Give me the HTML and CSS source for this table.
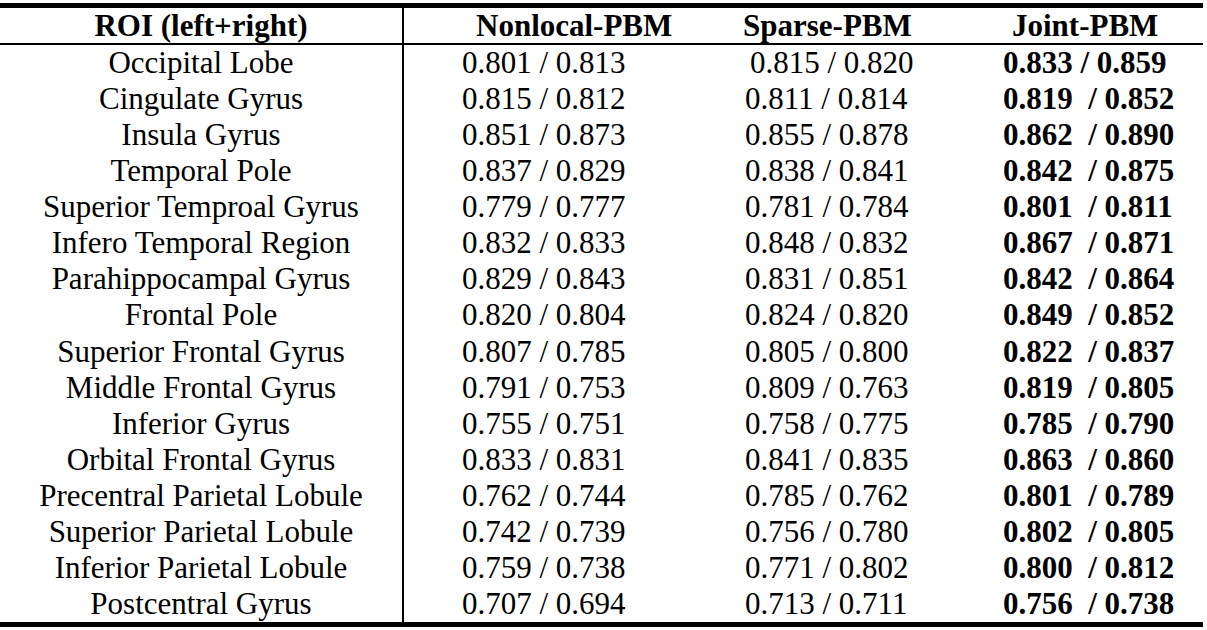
FILE: index.html
```html
<!DOCTYPE html>
<html>
<head>
<meta charset="utf-8">
<link rel="stylesheet" href="styles.css">
</head>
<body>
<div class="page">
<table class="results">
<thead>
<tr><th class="roi">ROI (left+right)</th><th class="nl">Nonlocal-PBM</th><th class="sp">Sparse-PBM</th><th class="jt">Joint-PBM</th></tr>
</thead>
<tbody>
<tr><td class="roi">Occipital Lobe</td><td class="nl">0.801 / 0.813</td><td class="sp first">0.815 / 0.820</td><td class="jt">0.833 / 0.859</td></tr>
<tr><td class="roi">Cingulate Gyrus</td><td class="nl">0.815 / 0.812</td><td class="sp">0.811 / 0.814</td><td class="jt">0.819  / 0.852</td></tr>
<tr><td class="roi">Insula Gyrus</td><td class="nl">0.851 / 0.873</td><td class="sp">0.855 / 0.878</td><td class="jt">0.862  / 0.890</td></tr>
<tr><td class="roi">Temporal Pole</td><td class="nl">0.837 / 0.829</td><td class="sp">0.838 / 0.841</td><td class="jt">0.842  / 0.875</td></tr>
<tr><td class="roi">Superior Temproal Gyrus</td><td class="nl">0.779 / 0.777</td><td class="sp">0.781 / 0.784</td><td class="jt">0.801  / 0.811</td></tr>
<tr><td class="roi">Infero Temporal Region</td><td class="nl">0.832 / 0.833</td><td class="sp">0.848 / 0.832</td><td class="jt">0.867  / 0.871</td></tr>
<tr><td class="roi">Parahippocampal Gyrus</td><td class="nl">0.829 / 0.843</td><td class="sp">0.831 / 0.851</td><td class="jt">0.842  / 0.864</td></tr>
<tr><td class="roi">Frontal Pole</td><td class="nl">0.820 / 0.804</td><td class="sp">0.824 / 0.820</td><td class="jt">0.849  / 0.852</td></tr>
<tr><td class="roi">Superior Frontal Gyrus</td><td class="nl">0.807 / 0.785</td><td class="sp">0.805 / 0.800</td><td class="jt">0.822  / 0.837</td></tr>
<tr><td class="roi">Middle Frontal Gyrus</td><td class="nl">0.791 / 0.753</td><td class="sp">0.809 / 0.763</td><td class="jt">0.819  / 0.805</td></tr>
<tr><td class="roi">Inferior Gyrus</td><td class="nl">0.755 / 0.751</td><td class="sp">0.758 / 0.775</td><td class="jt">0.785  / 0.790</td></tr>
<tr><td class="roi">Orbital Frontal Gyrus</td><td class="nl">0.833 / 0.831</td><td class="sp">0.841 / 0.835</td><td class="jt">0.863  / 0.860</td></tr>
<tr><td class="roi">Precentral Parietal Lobule</td><td class="nl">0.762 / 0.744</td><td class="sp">0.785 / 0.762</td><td class="jt">0.801  / 0.789</td></tr>
<tr><td class="roi">Superior Parietal Lobule</td><td class="nl">0.742 / 0.739</td><td class="sp">0.756 / 0.780</td><td class="jt">0.802  / 0.805</td></tr>
<tr><td class="roi">Inferior Parietal Lobule</td><td class="nl">0.759 / 0.738</td><td class="sp">0.771 / 0.802</td><td class="jt">0.800  / 0.812</td></tr>
<tr><td class="roi">Postcentral Gyrus</td><td class="nl">0.707 / 0.694</td><td class="sp">0.713 / 0.711</td><td class="jt">0.756  / 0.738</td></tr>
</tbody>
</table>
</div>
</body>
</html>
```

FILE: styles.css
```css
html, body {
  margin: 0;
  padding: 0;
  background: #fff;
}

.page {
  padding-top: 3px;
}

.results {
  border-collapse: separate;
  border-spacing: 0;
  table-layout: fixed;
  width: 1203px;
  font-family: "Liberation Serif", "Times New Roman", serif;
  font-size: 31px;
  color: #000;
  border-top: 5px solid #000;
  border-bottom: 5px solid #000;
}

.results th,
.results td {
  box-sizing: border-box;
  padding: 0;
  height: 36.0625px;
  line-height: 36px;
  white-space: pre;
  vertical-align: middle;
  overflow: hidden;
}

.results thead th {
  height: 37px;
  line-height: 35px;
  font-weight: bold;
  border-bottom: 2px solid #000;
}

.results .roi {
  width: 402px;
  text-align: center;
}

.results .nl {
  width: 316px;
  text-align: left;
  border-left: 2px solid #000;
  padding-left: 58px;
}

.results th.nl {
  padding-left: 72px;
}

.results .sp {
  width: 240px;
  text-align: left;
  padding-left: 27px;
}

.results td.sp.first {
  padding-left: 32px;
}

.results th.sp {
  padding-left: 25px;
}

.results .jt {
  width: 245px;
  text-align: left;
  padding-left: 45px;
  font-weight: bold;
}

.results th.jt {
  padding-left: 54px;
}
```
